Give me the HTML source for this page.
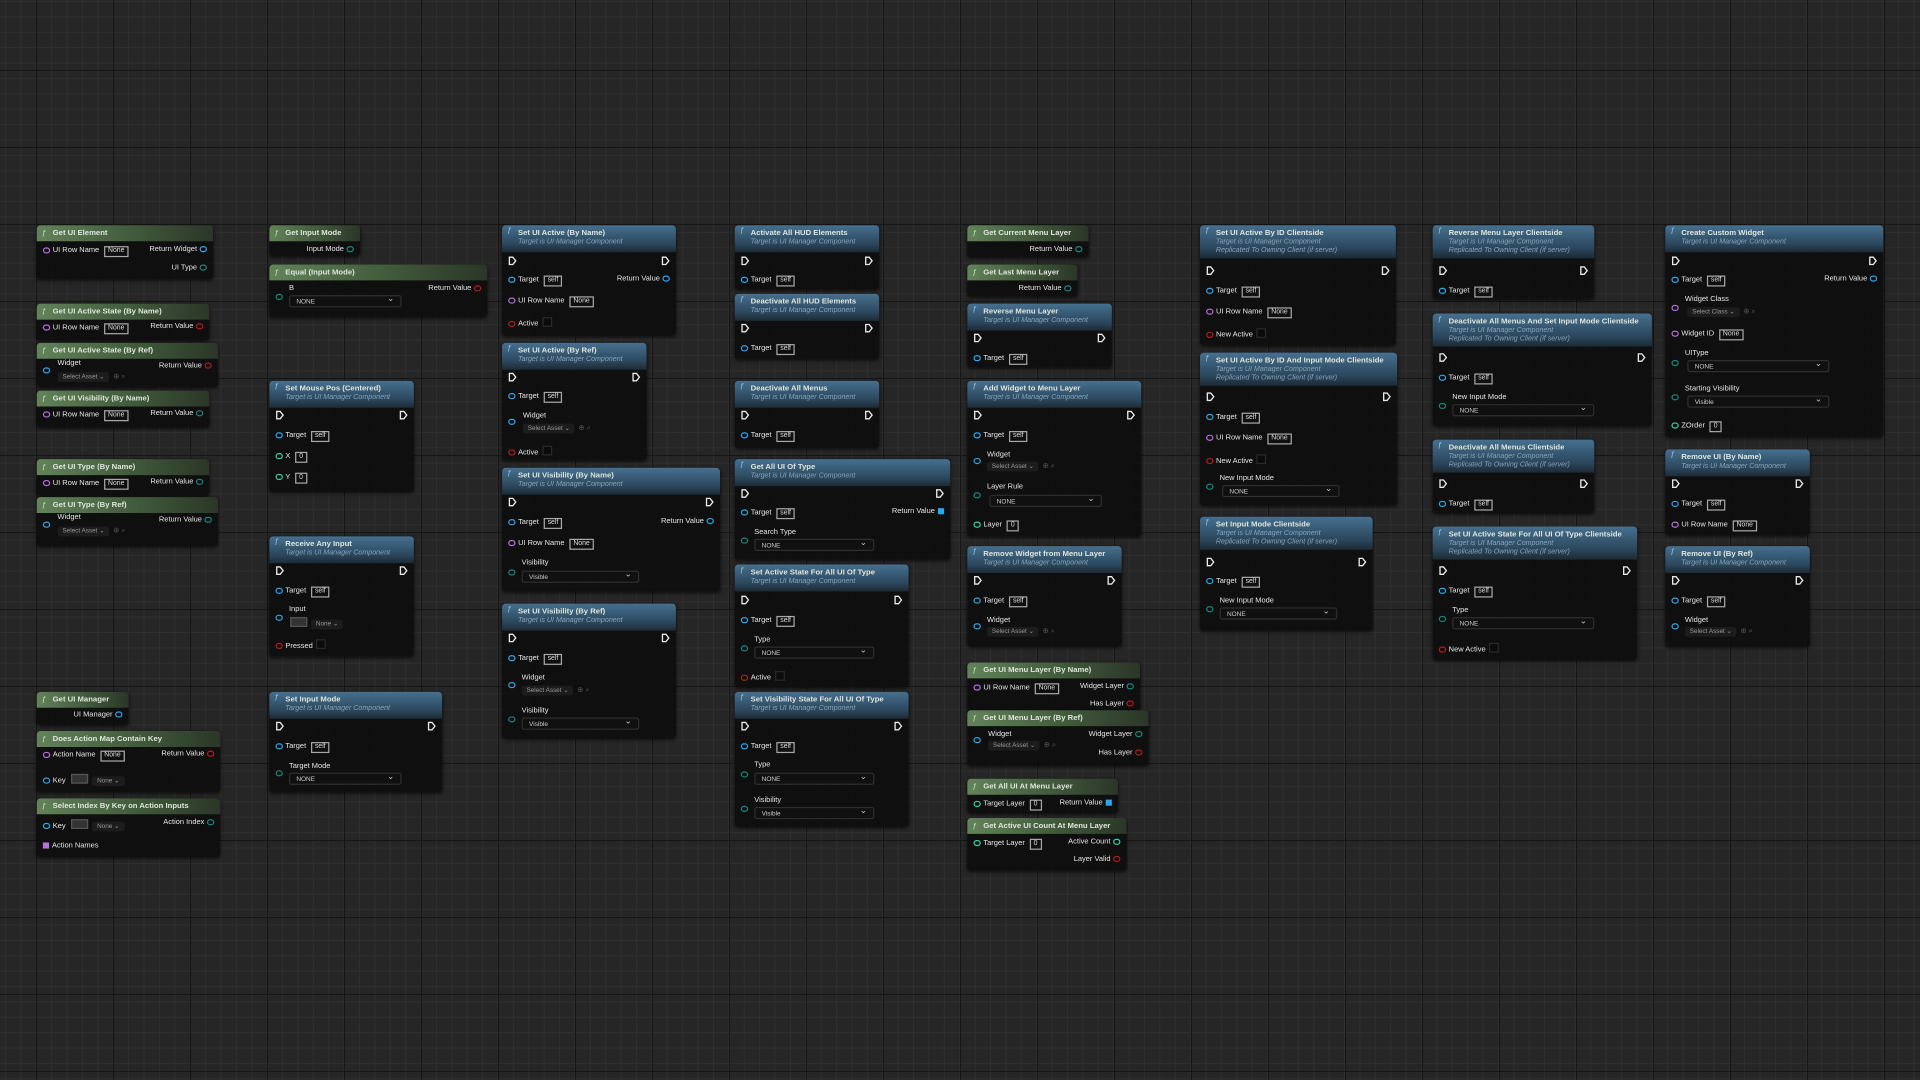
<!DOCTYPE html>
<html><head><meta charset="utf-8"><style>
html,body{margin:0;padding:0;width:1920px;height:1080px;overflow:hidden}
body{background-color:#262626;background-image:linear-gradient(#161616 1px,transparent 1px),linear-gradient(90deg,#161616 1px,transparent 1px),linear-gradient(#2f2f2f 1px,transparent 1px),linear-gradient(90deg,#2f2f2f 1px,transparent 1px);background-size:77px 77px,77px 77px,15.4px 15.4px,15.4px 15.4px;background-position:36px 70px,36px 70px,5px 1px,5px 1px;font-family:"Liberation Sans",sans-serif}
#c{position:absolute;left:0;top:0;width:1568px;height:882px;transform:scale(1.22449);transform-origin:0 0}
.n{position:absolute;background:rgba(14,14,14,.93);border-radius:3px;box-shadow:0 1px 3px rgba(0,0,0,.7);color:#e6e6e6;font-size:6.1px}
.h{height:13px;line-height:13px;border-radius:3px 3px 0 0;background:linear-gradient(90deg,#62835a,#415a3b 55%,#2b3628);padding-left:13px;font-weight:bold;font-size:6.3px;color:#dfe6dc;position:relative;white-space:nowrap}
.h:before{content:"ƒ";position:absolute;left:4px;top:0;font-style:italic;color:#cfe6c2;font-weight:normal}
.b{height:22px;line-height:9px;padding-top:2px;box-sizing:border-box;background:linear-gradient(180deg,#46708f,#2b465c 70%,#1c2a35)}
.b2{height:27px}
.b:before{color:#9cc8ea;line-height:9px}
.st{font-style:italic;font-weight:normal;color:#86a3b8;font-size:5.8px;line-height:6.5px;display:block}
.r{position:absolute;left:5px;height:8px;line-height:8px;white-space:nowrap}
.R{left:auto;right:5px}
.p{display:inline-block;width:3.6px;height:3.6px;border:1.2px solid;border-radius:50%;vertical-align:-1.2px;margin:0 2.5px 0 0}
.R .p{margin:0 0 0 2.5px}
.pu{border-color:#b46fe0}.bl{border-color:#2ea6ec}.tl{border-color:#15887c}.rd{border-color:#b41c1c}.gn{border-color:#2fd6a2}
s{text-decoration:none;display:inline-block;border:1px solid #a8a8a8;padding:0 2.5px;line-height:6.5px;font-size:5.6px;color:#ddd;margin-left:2px;vertical-align:0}
.dd{position:absolute;height:10px;line-height:10px;background:#101010;border:1px solid #2e2e2e;border-radius:2px;font-size:5.3px;color:#ccc;padding-left:5px;box-sizing:border-box}
.dd:after{content:"⌄";position:absolute;right:5px;top:-2px;font-size:7px}
.sa{display:inline-block;background:#1c1c1c;color:#999;font-size:5.2px;padding:0 4px;border-radius:2px;line-height:8px}
.ic{color:#555;font-size:6px;margin-left:3px}
.cb{display:inline-block;width:6px;height:6px;border:1px solid #2a2a2a;background:#0b0b0b;vertical-align:-1px;margin-left:3px}
.kb{display:inline-block;width:12px;height:6px;background:#333;border:1px solid #555;vertical-align:-1px;margin:0 3px}
.x{display:inline-block;width:7px;height:8px;vertical-align:top}
.arr{display:inline-block;width:5px;height:5px;background:#2ea6ec;vertical-align:-1px;margin-left:2.5px}
.grid{display:inline-block;width:5px;height:5px;background:#b46fe0;vertical-align:-1px;margin-right:2.5px}
</style></head><body><div id="c">
<svg width="0" height="0" style="position:absolute"><defs><symbol id="e" viewBox="0 0 7 8"><path d="M1 1H3.8L6.2 4L3.8 7H1Z" fill="none" stroke="#e8e8e8" stroke-width="1.1"/></symbol></defs></svg>

<!-- column 1 -->
<div class="n" style="left:30px;top:184px;width:144px;height:44px"><div class="h">Get UI Element</div>
<div class="r" style="top:17px"><i class="p pu"></i>UI Row Name <s>None</s></div>
<div class="r R" style="top:16px">Return Widget<i class="p bl"></i></div>
<div class="r R" style="top:31px">UI Type<i class="p tl"></i></div></div>

<div class="n" style="left:30px;top:248px;width:141px;height:30px"><div class="h">Get UI Active State (By Name)</div>
<div class="r" style="top:16px"><i class="p pu"></i>UI Row Name <s>None</s></div>
<div class="r R" style="top:15px">Return Value<i class="p rd"></i></div></div>

<div class="n" style="left:30px;top:280px;width:148px;height:36px"><div class="h">Get UI Active State (By Ref)</div>
<div class="r" style="top:13px;left:17px">Widget</div>
<div class="r" style="top:19px"><i class="p bl"></i></div>
<div class="r" style="top:24px;left:17px"><span class="sa">Select Asset ⌄</span><span class="ic">⊕ ⌕</span></div>
<div class="r R" style="top:15px">Return Value<i class="p rd"></i></div></div>

<div class="n" style="left:30px;top:319px;width:141px;height:30px"><div class="h">Get UI Visibility (By Name)</div>
<div class="r" style="top:16px"><i class="p pu"></i>UI Row Name <s>None</s></div>
<div class="r R" style="top:15px">Return Value<i class="p tl"></i></div></div>

<div class="n" style="left:30px;top:375px;width:141px;height:30px"><div class="h">Get UI Type (By Name)</div>
<div class="r" style="top:16px"><i class="p pu"></i>UI Row Name <s>None</s></div>
<div class="r R" style="top:15px">Return Value<i class="p tl"></i></div></div>

<div class="n" style="left:30px;top:406px;width:148px;height:40px"><div class="h">Get UI Type (By Ref)</div>
<div class="r" style="top:13px;left:17px">Widget</div>
<div class="r" style="top:19px"><i class="p bl"></i></div>
<div class="r" style="top:24px;left:17px"><span class="sa">Select Asset ⌄</span><span class="ic">⊕ ⌕</span></div>
<div class="r R" style="top:15px">Return Value<i class="p tl"></i></div></div>

<div class="n" style="left:30px;top:565px;width:75px;height:27px"><div class="h">Get UI Manager</div>
<div class="r R" style="top:15px">UI Manager<i class="p bl"></i></div></div>

<div class="n" style="left:30px;top:597px;width:150px;height:50px"><div class="h">Does Action Map Contain Key</div>
<div class="r" style="top:16px"><i class="p pu"></i>Action Name <s>None</s></div>
<div class="r R" style="top:15px">Return Value<i class="p rd"></i></div>
<div class="r" style="top:35px"><i class="p bl"></i>Key <span class="kb"></span><span class="sa">None ⌄</span></div></div>

<div class="n" style="left:30px;top:652px;width:150px;height:48px"><div class="h">Select Index By Key on Action Inputs</div>
<div class="r" style="top:17px"><i class="p bl"></i>Key <span class="kb"></span><span class="sa">None ⌄</span></div>
<div class="r R" style="top:16px">Action Index<i class="p tl"></i></div>
<div class="r" style="top:35px"><i class="grid"></i>Action Names</div></div>

<!-- column 2 -->
<div class="n" style="left:220px;top:184px;width:74px;height:25px"><div class="h">Get Input Mode</div>
<div class="r R" style="top:16px">Input Mode<i class="p tl"></i></div></div>

<div class="n" style="left:220px;top:216px;width:178px;height:43px"><div class="h">Equal (Input Mode)</div>
<div class="r" style="top:16px;left:16px">B</div>
<div class="r" style="top:23px"><i class="p tl"></i></div>
<div class="dd" style="left:16px;top:25px;width:92px">NONE</div>
<div class="r R" style="top:16px">Return Value<i class="p rd"></i></div></div>

<div class="n" style="left:220px;top:311px;width:118px;height:91px"><div class="h b">Set Mouse Pos (Centered)<span class="st">Target is UI Manager Component</span></div>
<div class="r" style="top:24px"><svg class="x"><use href="#e"/></svg></div><div class="r R" style="top:24px"><svg class="x"><use href="#e"/></svg></div>
<div class="r" style="top:41px"><i class="p bl"></i>Target <s>self</s></div>
<div class="r" style="top:58px"><i class="p gn"></i>X <s>0</s></div>
<div class="r" style="top:75px"><i class="p gn"></i>Y <s>0</s></div></div>

<div class="n" style="left:220px;top:438px;width:118px;height:98px"><div class="h b">Receive Any Input<span class="st">Target is UI Manager Component</span></div>
<div class="r" style="top:24px"><svg class="x"><use href="#e"/></svg></div><div class="r R" style="top:24px"><svg class="x"><use href="#e"/></svg></div>
<div class="r" style="top:41px"><i class="p bl"></i>Target <s>self</s></div>
<div class="r" style="top:56px;left:16px">Input</div>
<div class="r" style="top:63px"><i class="p bl"></i></div>
<div class="r" style="top:66px;left:14px"><span class="kb"></span><span class="sa">None ⌄</span></div>
<div class="r" style="top:84px"><i class="p rd"></i>Pressed<span class="cb"></span></div></div>

<div class="n" style="left:220px;top:565px;width:141px;height:82px"><div class="h b">Set Input Mode<span class="st">Target is UI Manager Component</span></div>
<div class="r" style="top:24px"><svg class="x"><use href="#e"/></svg></div><div class="r R" style="top:24px"><svg class="x"><use href="#e"/></svg></div>
<div class="r" style="top:41px"><i class="p bl"></i>Target <s>self</s></div>
<div class="r" style="top:57px;left:16px">Target Mode</div>
<div class="r" style="top:63px"><i class="p tl"></i></div>
<div class="dd" style="left:16px;top:66px;width:92px">NONE</div></div>

<!-- column 3 -->
<div class="n" style="left:410px;top:184px;width:142px;height:90px"><div class="h b">Set UI Active (By Name)<span class="st">Target is UI Manager Component</span></div>
<div class="r" style="top:25px"><svg class="x"><use href="#e"/></svg></div><div class="r R" style="top:25px"><svg class="x"><use href="#e"/></svg></div>
<div class="r" style="top:41px"><i class="p bl"></i>Target <s>self</s></div>
<div class="r R" style="top:40px">Return Value<i class="p bl"></i></div>
<div class="r" style="top:58px"><i class="p pu"></i>UI Row Name <s>None</s></div>
<div class="r" style="top:75px"><i class="p rd"></i>Active<span class="cb"></span></div></div>

<div class="n" style="left:410px;top:280px;width:118px;height:96px"><div class="h b">Set UI Active (By Ref)<span class="st">Target is UI Manager Component</span></div>
<div class="r" style="top:24px"><svg class="x"><use href="#e"/></svg></div><div class="r R" style="top:24px"><svg class="x"><use href="#e"/></svg></div>
<div class="r" style="top:40px"><i class="p bl"></i>Target <s>self</s></div>
<div class="r" style="top:56px;left:17px">Widget</div>
<div class="r" style="top:61px"><i class="p bl"></i></div>
<div class="r" style="top:66px;left:17px"><span class="sa">Select Asset ⌄</span><span class="ic">⊕ ⌕</span></div>
<div class="r" style="top:84px"><i class="p rd"></i>Active<span class="cb"></span></div></div>

<div class="n" style="left:410px;top:382px;width:178px;height:101px"><div class="h b">Set UI Visibility (By Name)<span class="st">Target is UI Manager Component</span></div>
<div class="r" style="top:24px"><svg class="x"><use href="#e"/></svg></div><div class="r R" style="top:24px"><svg class="x"><use href="#e"/></svg></div>
<div class="r" style="top:41px"><i class="p bl"></i>Target <s>self</s></div>
<div class="r R" style="top:40px">Return Value<i class="p bl"></i></div>
<div class="r" style="top:58px"><i class="p pu"></i>UI Row Name <s>None</s></div>
<div class="r" style="top:74px;left:16px">Visibility</div>
<div class="r" style="top:82px"><i class="p tl"></i></div>
<div class="dd" style="left:16px;top:84px;width:96px">Visible</div></div>

<div class="n" style="left:410px;top:493px;width:142px;height:110px"><div class="h b">Set UI Visibility (By Ref)<span class="st">Target is UI Manager Component</span></div>
<div class="r" style="top:24px"><svg class="x"><use href="#e"/></svg></div><div class="r R" style="top:24px"><svg class="x"><use href="#e"/></svg></div>
<div class="r" style="top:41px"><i class="p bl"></i>Target <s>self</s></div>
<div class="r" style="top:57px;left:16px">Widget</div>
<div class="r" style="top:63px"><i class="p bl"></i></div>
<div class="r" style="top:67px;left:16px"><span class="sa">Select Asset ⌄</span><span class="ic">⊕ ⌕</span></div>
<div class="r" style="top:84px;left:16px">Visibility</div>
<div class="r" style="top:91px"><i class="p tl"></i></div>
<div class="dd" style="left:16px;top:93px;width:96px">Visible</div></div>

<!-- column 4 -->
<div class="n" style="left:600px;top:184px;width:118px;height:52px"><div class="h b">Activate All HUD Elements<span class="st">Target is UI Manager Component</span></div>
<div class="r" style="top:25px"><svg class="x"><use href="#e"/></svg></div><div class="r R" style="top:25px"><svg class="x"><use href="#e"/></svg></div>
<div class="r" style="top:41px"><i class="p bl"></i>Target <s>self</s></div></div>

<div class="n" style="left:600px;top:240px;width:118px;height:53px"><div class="h b">Deactivate All HUD Elements<span class="st">Target is UI Manager Component</span></div>
<div class="r" style="top:24px"><svg class="x"><use href="#e"/></svg></div><div class="r R" style="top:24px"><svg class="x"><use href="#e"/></svg></div>
<div class="r" style="top:41px"><i class="p bl"></i>Target <s>self</s></div></div>

<div class="n" style="left:600px;top:311px;width:118px;height:55px"><div class="h b">Deactivate All Menus<span class="st">Target is UI Manager Component</span></div>
<div class="r" style="top:24px"><svg class="x"><use href="#e"/></svg></div><div class="r R" style="top:24px"><svg class="x"><use href="#e"/></svg></div>
<div class="r" style="top:41px"><i class="p bl"></i>Target <s>self</s></div></div>

<div class="n" style="left:600px;top:375px;width:176px;height:82px"><div class="h b">Get All UI Of Type<span class="st">Target is UI Manager Component</span></div>
<div class="r" style="top:24px"><svg class="x"><use href="#e"/></svg></div><div class="r R" style="top:24px"><svg class="x"><use href="#e"/></svg></div>
<div class="r" style="top:40px"><i class="p bl"></i>Target <s>self</s></div>
<div class="r R" style="top:39px">Return Value<i class="arr"></i></div>
<div class="r" style="top:56px;left:16px">Search Type</div>
<div class="r" style="top:63px"><i class="p tl"></i></div>
<div class="dd" style="left:16px;top:65px;width:98px">NONE</div></div>

<div class="n" style="left:600px;top:461px;width:142px;height:100px"><div class="h b">Set Active State For All UI Of Type<span class="st">Target is UI Manager Component</span></div>
<div class="r" style="top:25px"><svg class="x"><use href="#e"/></svg></div><div class="r R" style="top:25px"><svg class="x"><use href="#e"/></svg></div>
<div class="r" style="top:42px"><i class="p bl"></i>Target <s>self</s></div>
<div class="r" style="top:58px;left:16px">Type</div>
<div class="r" style="top:65px"><i class="p tl"></i></div>
<div class="dd" style="left:16px;top:67px;width:98px">NONE</div>
<div class="r" style="top:87px"><i class="p rd"></i>Active<span class="cb"></span></div></div>

<div class="n" style="left:600px;top:565px;width:142px;height:110px"><div class="h b">Set Visibility State For All UI Of Type<span class="st">Target is UI Manager Component</span></div>
<div class="r" style="top:24px"><svg class="x"><use href="#e"/></svg></div><div class="r R" style="top:24px"><svg class="x"><use href="#e"/></svg></div>
<div class="r" style="top:41px"><i class="p bl"></i>Target <s>self</s></div>
<div class="r" style="top:56px;left:16px">Type</div>
<div class="r" style="top:64px"><i class="p tl"></i></div>
<div class="dd" style="left:16px;top:66px;width:98px">NONE</div>
<div class="r" style="top:85px;left:16px">Visibility</div>
<div class="r" style="top:92px"><i class="p tl"></i></div>
<div class="dd" style="left:16px;top:94px;width:98px">Visible</div></div>

<!-- column 5 -->
<div class="n" style="left:790px;top:184px;width:99px;height:26px"><div class="h">Get Current Menu Layer</div>
<div class="r R" style="top:16px">Return Value<i class="p tl"></i></div></div>

<div class="n" style="left:790px;top:216px;width:90px;height:26px"><div class="h">Get Last Menu Layer</div>
<div class="r R" style="top:16px">Return Value<i class="p tl"></i></div></div>

<div class="n" style="left:790px;top:248px;width:118px;height:52px"><div class="h b">Reverse Menu Layer<span class="st">Target is UI Manager Component</span></div>
<div class="r" style="top:24px"><svg class="x"><use href="#e"/></svg></div><div class="r R" style="top:24px"><svg class="x"><use href="#e"/></svg></div>
<div class="r" style="top:41px"><i class="p bl"></i>Target <s>self</s></div></div>

<div class="n" style="left:790px;top:311px;width:142px;height:127px"><div class="h b">Add Widget to Menu Layer<span class="st">Target is UI Manager Component</span></div>
<div class="r" style="top:24px"><svg class="x"><use href="#e"/></svg></div><div class="r R" style="top:24px"><svg class="x"><use href="#e"/></svg></div>
<div class="r" style="top:41px"><i class="p bl"></i>Target <s>self</s></div>
<div class="r" style="top:57px;left:16px">Widget</div>
<div class="r" style="top:62px"><i class="p bl"></i></div>
<div class="r" style="top:66px;left:16px"><span class="sa">Select Asset ⌄</span><span class="ic">⊕ ⌕</span></div>
<div class="r" style="top:83px;left:16px">Layer Rule</div>
<div class="r" style="top:90px"><i class="p tl"></i></div>
<div class="dd" style="left:18px;top:93px;width:92px">NONE</div>
<div class="r" style="top:114px"><i class="p gn"></i>Layer <s>0</s></div></div>

<div class="n" style="left:790px;top:446px;width:126px;height:82px"><div class="h b">Remove Widget from Menu Layer<span class="st">Target is UI Manager Component</span></div>
<div class="r" style="top:24px"><svg class="x"><use href="#e"/></svg></div><div class="r R" style="top:24px"><svg class="x"><use href="#e"/></svg></div>
<div class="r" style="top:41px"><i class="p bl"></i>Target <s>self</s></div>
<div class="r" style="top:57px;left:16px">Widget</div>
<div class="r" style="top:62px"><i class="p bl"></i></div>
<div class="r" style="top:66px;left:16px"><span class="sa">Select Asset ⌄</span><span class="ic">⊕ ⌕</span></div></div>

<div class="n" style="left:790px;top:541px;width:141px;height:40px"><div class="h">Get UI Menu Layer (By Name)</div>
<div class="r" style="top:17px"><i class="p pu"></i>UI Row Name <s>None</s></div>
<div class="r R" style="top:16px">Widget Layer<i class="p tl"></i></div>
<div class="r R" style="top:30px">Has Layer<i class="p rd"></i></div></div>

<div class="n" style="left:790px;top:580px;width:148px;height:45px"><div class="h">Get UI Menu Layer (By Ref)</div>
<div class="r" style="top:16px;left:17px">Widget</div>
<div class="r" style="top:21px"><i class="p bl"></i></div>
<div class="r" style="top:25px;left:17px"><span class="sa">Select Asset ⌄</span><span class="ic">⊕ ⌕</span></div>
<div class="r R" style="top:16px">Widget Layer<i class="p tl"></i></div>
<div class="r R" style="top:31px">Has Layer<i class="p rd"></i></div></div>

<div class="n" style="left:790px;top:636px;width:123px;height:28px"><div class="h">Get All UI At Menu Layer</div>
<div class="r" style="top:17px"><i class="p gn"></i>Target Layer <s>0</s></div>
<div class="r R" style="top:16px">Return Value<i class="arr"></i></div></div>

<div class="n" style="left:790px;top:668px;width:130px;height:43px"><div class="h">Get Active UI Count At Menu Layer</div>
<div class="r" style="top:17px"><i class="p gn"></i>Target Layer <s>0</s></div>
<div class="r R" style="top:16px">Active Count<i class="p gn"></i></div>
<div class="r R" style="top:30px">Layer Valid<i class="p rd"></i></div></div>

<!-- column 6 -->
<div class="n" style="left:980px;top:184px;width:160px;height:98px"><div class="h b b2">Set UI Active By ID Clientside<span class="st">Target is UI Manager Component</span><span class="st">Replicated To Owning Client (if server)</span></div>
<div class="r" style="top:33px"><svg class="x"><use href="#e"/></svg></div><div class="r R" style="top:33px"><svg class="x"><use href="#e"/></svg></div>
<div class="r" style="top:50px"><i class="p bl"></i>Target <s>self</s></div>
<div class="r" style="top:67px"><i class="p pu"></i>UI Row Name <s>None</s></div>
<div class="r" style="top:84px"><i class="p rd"></i>New Active<span class="cb"></span></div></div>

<div class="n" style="left:980px;top:288px;width:161px;height:125px"><div class="h b b2">Set UI Active By ID And Input Mode Clientside<span class="st">Target is UI Manager Component</span><span class="st">Replicated To Owning Client (if server)</span></div>
<div class="r" style="top:32px"><svg class="x"><use href="#e"/></svg></div><div class="r R" style="top:32px"><svg class="x"><use href="#e"/></svg></div>
<div class="r" style="top:49px"><i class="p bl"></i>Target <s>self</s></div>
<div class="r" style="top:66px"><i class="p pu"></i>UI Row Name <s>None</s></div>
<div class="r" style="top:83px"><i class="p rd"></i>New Active<span class="cb"></span></div>
<div class="r" style="top:99px;left:16px">New Input Mode</div>
<div class="r" style="top:106px"><i class="p tl"></i></div>
<div class="dd" style="left:18px;top:108px;width:96px">NONE</div></div>

<div class="n" style="left:980px;top:422px;width:141px;height:93px"><div class="h b b2">Set Input Mode Clientside<span class="st">Target is UI Manager Component</span><span class="st">Replicated To Owning Client (if server)</span></div>
<div class="r" style="top:33px"><svg class="x"><use href="#e"/></svg></div><div class="r R" style="top:33px"><svg class="x"><use href="#e"/></svg></div>
<div class="r" style="top:49px"><i class="p bl"></i>Target <s>self</s></div>
<div class="r" style="top:65px;left:16px">New Input Mode</div>
<div class="r" style="top:72px"><i class="p tl"></i></div>
<div class="dd" style="left:16px;top:74px;width:96px">NONE</div></div>

<!-- column 7 -->
<div class="n" style="left:1170px;top:184px;width:132px;height:60px"><div class="h b b2">Reverse Menu Layer Clientside<span class="st">Target is UI Manager Component</span><span class="st">Replicated To Owning Client (if server)</span></div>
<div class="r" style="top:33px"><svg class="x"><use href="#e"/></svg></div><div class="r R" style="top:33px"><svg class="x"><use href="#e"/></svg></div>
<div class="r" style="top:50px"><i class="p bl"></i>Target <s>self</s></div></div>

<div class="n" style="left:1170px;top:256px;width:179px;height:92px"><div class="h b b2">Deactivate All Menus And Set Input Mode Clientside<span class="st">Target is UI Manager Component</span><span class="st">Replicated To Owning Client (if server)</span></div>
<div class="r" style="top:32px"><svg class="x"><use href="#e"/></svg></div><div class="r R" style="top:32px"><svg class="x"><use href="#e"/></svg></div>
<div class="r" style="top:49px"><i class="p bl"></i>Target <s>self</s></div>
<div class="r" style="top:65px;left:16px">New Input Mode</div>
<div class="r" style="top:72px"><i class="p tl"></i></div>
<div class="dd" style="left:16px;top:74px;width:116px">NONE</div></div>

<div class="n" style="left:1170px;top:359px;width:132px;height:60px"><div class="h b b2">Deactivate All Menus Clientside<span class="st">Target is UI Manager Component</span><span class="st">Replicated To Owning Client (if server)</span></div>
<div class="r" style="top:32px"><svg class="x"><use href="#e"/></svg></div><div class="r R" style="top:32px"><svg class="x"><use href="#e"/></svg></div>
<div class="r" style="top:49px"><i class="p bl"></i>Target <s>self</s></div></div>

<div class="n" style="left:1170px;top:430px;width:167px;height:109px"><div class="h b b2">Set UI Active State For All UI Of Type Clientside<span class="st">Target is UI Manager Component</span><span class="st">Replicated To Owning Client (if server)</span></div>
<div class="r" style="top:32px"><svg class="x"><use href="#e"/></svg></div><div class="r R" style="top:32px"><svg class="x"><use href="#e"/></svg></div>
<div class="r" style="top:49px"><i class="p bl"></i>Target <s>self</s></div>
<div class="r" style="top:65px;left:16px">Type</div>
<div class="r" style="top:72px"><i class="p tl"></i></div>
<div class="dd" style="left:16px;top:74px;width:116px">NONE</div>
<div class="r" style="top:95px"><i class="p rd"></i>New Active<span class="cb"></span></div></div>

<!-- column 8 -->
<div class="n" style="left:1360px;top:184px;width:178px;height:173px"><div class="h b">Create Custom Widget<span class="st">Target is UI Manager Component</span></div>
<div class="r" style="top:25px"><svg class="x"><use href="#e"/></svg></div><div class="r R" style="top:25px"><svg class="x"><use href="#e"/></svg></div>
<div class="r" style="top:41px"><i class="p bl"></i>Target <s>self</s></div>
<div class="r R" style="top:40px">Return Value<i class="p bl"></i></div>
<div class="r" style="top:57px;left:16px">Widget Class</div>
<div class="r" style="top:64px"><i class="p pu"></i></div>
<div class="r" style="top:67px;left:18px"><span class="sa">Select Class ⌄</span><span class="ic">⊕ ⌕</span></div>
<div class="r" style="top:85px"><i class="p pu"></i>Widget ID <s>None</s></div>
<div class="r" style="top:101px;left:16px">UIType</div>
<div class="r" style="top:109px"><i class="p tl"></i></div>
<div class="dd" style="left:18px;top:110px;width:116px">NONE</div>
<div class="r" style="top:130px;left:16px">Starting Visibility</div>
<div class="r" style="top:137px"><i class="p tl"></i></div>
<div class="dd" style="left:18px;top:139px;width:116px">Visible</div>
<div class="r" style="top:160px"><i class="p gn"></i>ZOrder <s>0</s></div></div>

<div class="n" style="left:1360px;top:367px;width:118px;height:70px"><div class="h b">Remove UI (By Name)<span class="st">Target is UI Manager Component</span></div>
<div class="r" style="top:24px"><svg class="x"><use href="#e"/></svg></div><div class="r R" style="top:24px"><svg class="x"><use href="#e"/></svg></div>
<div class="r" style="top:41px"><i class="p bl"></i>Target <s>self</s></div>
<div class="r" style="top:58px"><i class="p pu"></i>UI Row Name <s>None</s></div></div>

<div class="n" style="left:1360px;top:446px;width:118px;height:82px"><div class="h b">Remove UI (By Ref)<span class="st">Target is UI Manager Component</span></div>
<div class="r" style="top:24px"><svg class="x"><use href="#e"/></svg></div><div class="r R" style="top:24px"><svg class="x"><use href="#e"/></svg></div>
<div class="r" style="top:41px"><i class="p bl"></i>Target <s>self</s></div>
<div class="r" style="top:57px;left:16px">Widget</div>
<div class="r" style="top:62px"><i class="p bl"></i></div>
<div class="r" style="top:66px;left:16px"><span class="sa">Select Asset ⌄</span><span class="ic">⊕ ⌕</span></div></div>

</div></body></html>
